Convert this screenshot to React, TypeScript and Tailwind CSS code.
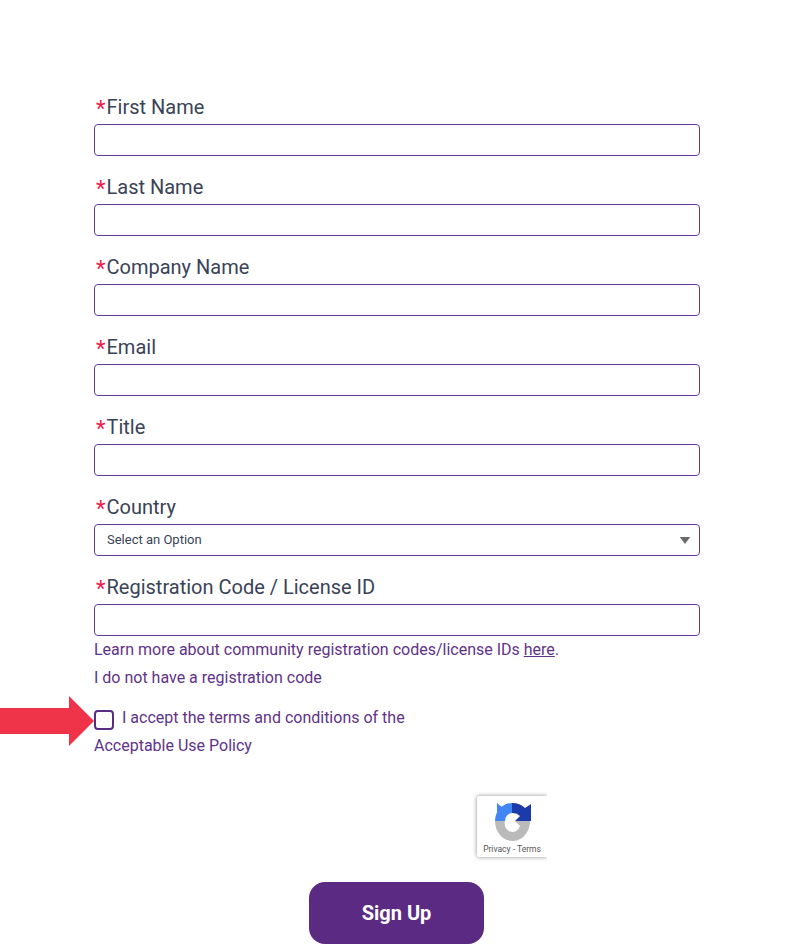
const fields = ["First Name", "Last Name", "Company Name", "Email", "Title"];

function Label({ text }: { text: string }) {
  return (
    <label className="flex h-[32px] items-center pb-[2px] text-[20px] leading-[28px] text-[#3a4357]">
      <span className="ml-[2px] mr-[0.5px] w-[10px] translate-y-[2px] text-[22px] leading-[28px] text-[#ef1d4d]">*</span>
      {text}
    </label>
  );
}

function TextField({ label }: { label: string }) {
  return (
    <div className="mb-[16px]">
      <Label text={label} />
      <input type="text" className="block h-[32px] w-full rounded-[4px] border border-[#64389a] bg-white" />
    </div>
  );
}

function Recaptcha() {
  return (
    <div className="flex h-[61px] w-[70px] flex-col items-center rounded-l-[2px] bg-white pt-[2px] shadow-[0_0_4px_rgba(0,0,0,0.45)] [clip-path:inset(-6px_0_-6px_-6px)]">
      <svg viewBox="0 0 48 46" className="h-[46px] w-[48px]">
        <path d="M7 23 H17 A7.5 8 0 0 0 32 28 L27 23 H42 A17.5 20 0 0 1 7 23 Z" fill="#bababa" />
        <path d="M7 23 A17 18 0 0 1 24 5 V15 A7.5 8 0 0 0 17 23 Z" fill="#4285f4" />
        <path d="M9 5 L21 15 L9 21 Z" fill="#4285f4" />
        <path d="M24 5 A18 18 0 0 1 37 10 L43 6 V23 H27 L32 18 A10 10 0 0 0 24 15 Z" fill="#1c3aa9" />
      </svg>
      <div className="whitespace-nowrap text-[8.5px] leading-[10px] text-[#555555]">Privacy - Terms</div>
    </div>
  );
}

export default function App() {
  return (
    <div className="relative h-[946px] w-[797px] overflow-hidden bg-white font-['Roboto',sans-serif]">
      <svg viewBox="0 0 94 50" className="absolute left-0 top-[696px] h-[50px] w-[94px]">
        <path d="M0 12 H69 V0 L94 25 L69 50 V38 H0 Z" fill="#ef3349" />
      </svg>

      <form className="flex flex-col pl-[94px] pr-[97px] pt-[92px]">
        {fields.map((f) => (
          <TextField key={f} label={f} />
        ))}

        <div className="mb-[16px]">
          <Label text="Country" />
          <div className="flex h-[32px] w-full items-center justify-between rounded-[4px] border border-[#64389a] bg-white pl-[12px] pr-[8px]">
            <span className="text-[13px] text-[#3a4357]">Select an Option</span>
            <svg viewBox="0 0 12 8" className="h-[7px] w-[12px]">
              <path d="M0 0 H12 L6 8 Z" fill="#6b6b6b" />
            </svg>
          </div>
        </div>

        <Label text="Registration Code / License ID" />
        <input type="text" className="block h-[32px] w-full rounded-[4px] border border-[#64389a] bg-white" />

        <p className="mt-[2px] h-[26px] text-[16px] leading-[24px] text-[#5f3388]">
          Learn more about community registration codes/license IDs <span className="underline">here</span>.
        </p>
        <p className="h-[28px] text-[16px] leading-[28px] text-[#5f3388]">I do not have a registration code</p>

        <div className="mt-[12px] flex h-[28px] items-center text-[16px] text-[#5f3388]">
          <span className="mr-[8px] h-[20px] w-[20px] translate-y-[2px] rounded-[4px] border-2 border-[#5b2a82]" />
          I accept the terms and conditions of the
        </div>
        <div className="h-[28px] text-[16px] leading-[28px] text-[#5f3388]">Acceptable Use Policy</div>

        <div className="ml-[383px] mt-[36px]">
          <Recaptcha />
        </div>

        <button type="button" className="ml-[215px] mt-[25px] h-[62px] w-[175px] rounded-[16px] bg-[#5b2a82] text-[20px] font-bold text-white">
          Sign Up
        </button>
      </form>
    </div>
  );
}
